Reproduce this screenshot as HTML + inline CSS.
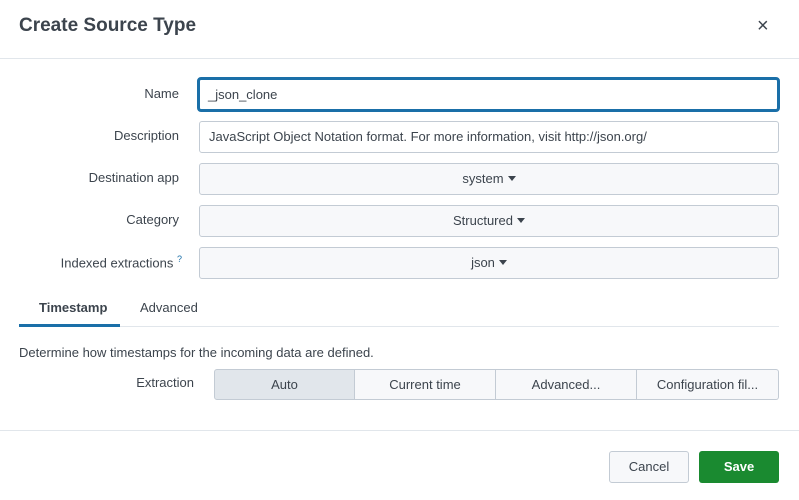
<!DOCTYPE html>
<html><head><style>
*{box-sizing:border-box;margin:0;padding:0}
body{width:799px;height:500px;background:#fff;font-family:"Liberation Sans",sans-serif;color:#3c444d;position:relative;overflow:hidden;font-size:13px}
.a{position:absolute}
.lbl{position:absolute;right:620px;font-size:13px;color:#3c444d;text-align:right}
.box{position:absolute;left:199px;width:580px;height:32px;border:1px solid #c3cbd4;border-radius:3px;background:#f7f8fa;font-size:13px;line-height:30px;text-align:center;color:#3c444d}
.car{display:inline-block;border-left:4px solid transparent;border-right:4px solid transparent;border-top:5px solid #3c444d;vertical-align:middle;margin-left:4px;margin-top:-2px}
.seg{position:absolute;top:369px;height:31px;width:141px;border:1px solid #c3cbd4;background:#f7f8fa;text-align:center;line-height:29px;font-size:13px}
</style></head><body>
<div class="a" style="left:19px;top:15px;font-size:19px;font-weight:bold;color:#3c444d">Create Source Type</div>
<div class="a" style="left:757px;top:15px;font-size:20px;color:#3c444d">×</div>
<div class="a" style="left:0;top:58px;width:799px;height:1px;background:#e1e6eb"></div>

<div class="lbl" style="top:86px">Name</div>
<div class="a" style="left:197px;top:77px;width:583px;height:35px;border:3px solid #1a6fa8;border-radius:4px;background:#fff;padding-left:8px;line-height:29px;font-size:13px">_json_clone</div>
<div class="lbl" style="top:128px">Description</div>
<div class="box" style="top:121px;background:#fff;text-align:left;padding-left:9px">JavaScript Object Notation format. For more information, visit http://json.org/</div>
<div class="lbl" style="top:170px">Destination app</div>
<div class="box" style="top:163px">system<span class="car"></span></div>
<div class="lbl" style="top:212px">Category</div>
<div class="box" style="top:205px">Structured<span class="car"></span></div>
<div class="lbl" style="top:254px;right:617px">Indexed extractions <sup style="color:#1a6fa8;font-size:9px">?</sup></div>
<div class="box" style="top:247px">json<span class="car"></span></div>

<div class="a" style="left:39px;top:300px;font-size:13px;color:#3c444d;font-weight:bold">Timestamp</div>
<div class="a" style="left:140px;top:300px;font-size:13px">Advanced</div>
<div class="a" style="left:19px;top:326px;width:760px;height:1px;background:#e1e6eb"></div>
<div class="a" style="left:19px;top:324px;width:101px;height:3px;background:#1a6fa8"></div>

<div class="a" style="left:19px;top:345px;font-size:13px">Determine how timestamps for the incoming data are defined.</div>
<div class="lbl" style="top:375px;right:605px">Extraction</div>
<div class="seg" style="left:214px;background:#e1e6eb;border-radius:3px 0 0 3px">Auto</div>
<div class="seg" style="left:355px;border-left:none">Current time</div>
<div class="seg" style="left:496px;border-left:none">Advanced...</div>
<div class="seg" style="left:637px;border-left:none;border-radius:0 3px 3px 0;width:142px">Configuration fil...</div>

<div class="a" style="left:0;top:430px;width:799px;height:1px;background:#e1e6eb"></div>
<div class="a" style="left:609px;top:451px;width:80px;height:32px;border:1px solid #c3cbd4;border-radius:3px;background:#f7f8fa;text-align:center;line-height:30px">Cancel</div>
<div class="a" style="left:699px;top:451px;width:80px;height:32px;border-radius:3px;background:#1a8a30;color:#fff;font-weight:bold;text-align:center;line-height:32px">Save</div>
</body></html>
